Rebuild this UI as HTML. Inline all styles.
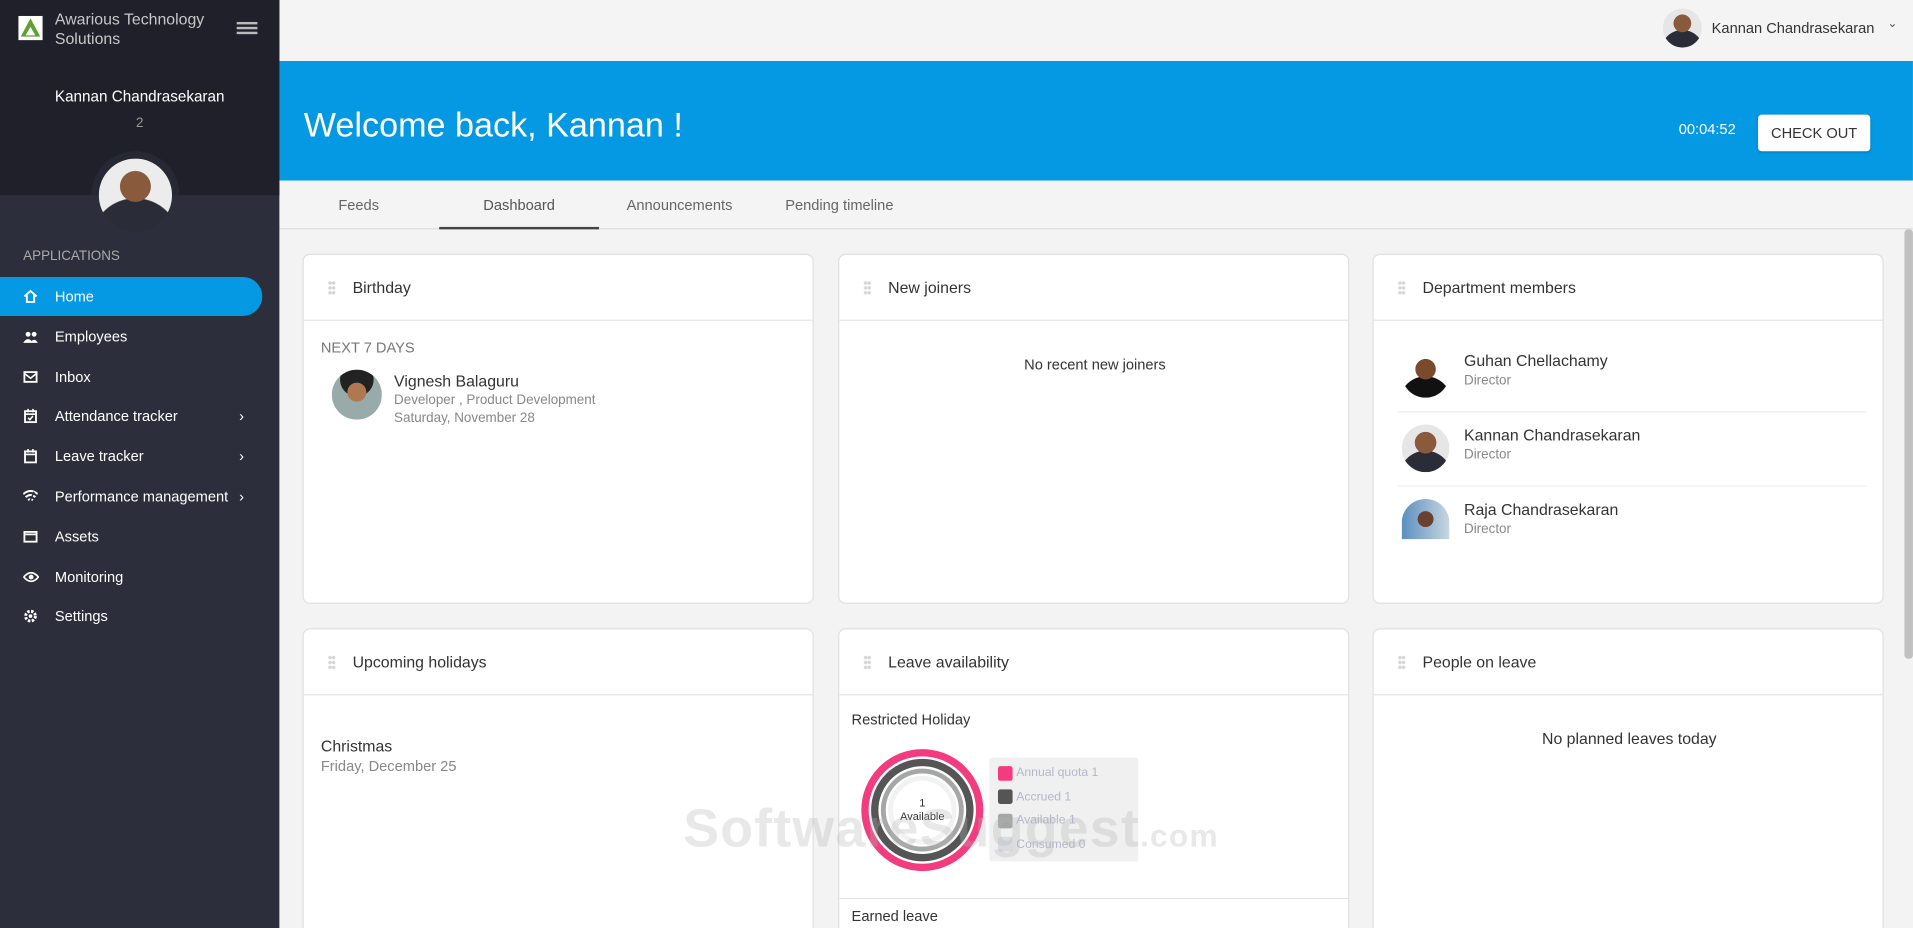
<!DOCTYPE html>
<html><head><meta charset="utf-8"><style>
*{box-sizing:border-box;margin:0;padding:0}
html,body{width:1913px;height:928px;overflow:hidden;background:#f3f3f3}
#o{position:relative;width:1913px;height:928px;overflow:hidden}
#w{position:absolute;left:0;top:0;width:1568px;height:761px;overflow:hidden;transform:scale(1.22);transform-origin:0 0;font-family:"Liberation Sans",sans-serif;color:#333}
.a{position:absolute}
.sb{left:0;top:0;width:229px;height:761px;background:#2c2f3b}
.sbt{left:0;top:0;width:229px;height:160px;background:#1f2029}
.mi{position:absolute;left:0;width:215px;height:32px;color:#fff;font-size:12px;line-height:32px;padding-left:45px}
.mi svg{position:absolute;left:19px;top:10px}
.mi .ch{position:absolute;left:196px;top:0;font-size:12px}
.card{position:absolute;background:#fff;border:1px solid #e0e0e0;border-radius:6px;overflow:hidden}
.ch2{height:54px;border-bottom:1px solid #e4e4e4;font-size:13px;line-height:54px;padding-left:40px;position:relative;color:#333}
.dots{position:absolute;left:20px;top:21px;width:6px;height:12px;background:radial-gradient(circle,#d6d6d6 1.3px,transparent 1.6px) 0 0/3px 4px}
.av{position:absolute;border-radius:50%;background:radial-gradient(circle at 50% 38%,#8a5a3c 0 28%,transparent 29%),radial-gradient(circle at 50% 110%,#2a2c38 0 45%,#e6e6e6 46%)}
.tab{position:absolute;top:148px;height:40px;line-height:40px;font-size:12px;color:#666;text-align:center}
</style></head><body><div id="o"><div id="w">
<div class="a" style="left:229px;top:0;width:1339px;height:50px;background:#f4f4f4"></div>
<div class="a" style="left:229px;top:50px;width:1339px;height:98px;background:#0499e2"></div>
<div class="a" style="left:249px;top:87px;font-size:28px;color:#fff">Welcome back, Kannan !</div>
<div class="a" style="left:1376px;top:99px;font-size:12px;color:#fff">00:04:52</div>
<div class="a" style="left:1441px;top:94px;width:92px;height:30px;background:#fff;border-radius:3px;font-size:12px;line-height:30px;text-align:center;color:#333;box-shadow:0 1px 2px rgba(0,0,0,.2)">CHECK OUT</div>
<div class="av" style="left:1363px;top:7px;width:32px;height:32px"></div>
<div class="a" style="left:1403px;top:16px;font-size:12px;color:#333">Kannan Chandrasekaran</div>
<div class="a" style="left:1547px;top:14px;font-size:10px;color:#555">&#8964;</div>
<div class="a" style="left:229px;top:148px;width:1339px;height:40px;background:#f4f4f4;border-bottom:1px solid #ddd"></div>
<div class="tab" style="left:264px;width:60px">Feeds</div>
<div class="tab" style="left:360px;width:131px;color:#555;border-bottom:2px solid #444">Dashboard</div>
<div class="tab" style="left:500px;width:114px">Announcements</div>
<div class="tab" style="left:630px;width:116px">Pending timeline</div>
<div class="a" style="left:1561px;top:188px;width:7px;height:352px;background:#c1c1c1;border-radius:3px"></div>

<div class="card" style="left:248px;top:208px;width:419px;height:287px"><div class="ch2"><div class="dots"></div>Birthday</div>
<div class="a" style="left:14px;top:69px;font-size:12px;color:#777">NEXT 7 DAYS</div>
<div class="av" style="left:23px;top:94px;width:41px;height:41px;background:radial-gradient(circle at 50% 45%,#b07850 0 25%,transparent 26%),radial-gradient(circle at 50% 20%,#222 0 35%,#9aa 36%)"></div>
<div class="a" style="left:74px;top:96px;font-size:13px;color:#333">Vignesh Balaguru</div>
<div class="a" style="left:74px;top:113px;font-size:11px;color:#888">Developer , Product Development</div>
<div class="a" style="left:74px;top:128px;font-size:11px;color:#888">Saturday, November 28</div></div>

<div class="card" style="left:687px;top:208px;width:419px;height:287px"><div class="ch2"><div class="dots"></div>New joiners</div>
<div class="a" style="left:0;width:419px;top:83px;text-align:center;font-size:12px;color:#333">No recent new joiners</div></div>

<div class="card" style="left:1125px;top:208px;width:419px;height:287px"><div class="ch2"><div class="dots"></div>Department members</div>
<div class="av" style="left:23px;top:78px;width:39px;height:39px;background:radial-gradient(circle at 50% 40%,#7a4a2c 0 27%,transparent 28%),radial-gradient(circle at 50% 110%,#111 0 45%,#fff 46%)"></div>
<div class="a" style="left:74px;top:79px;font-size:13px">Guhan Chellachamy</div><div class="a" style="left:74px;top:97px;font-size:11px;color:#888">Director</div>
<div class="a" style="left:20px;top:128px;width:384px;height:1px;background:#eee"></div>
<div class="av" style="left:23px;top:139px;width:39px;height:39px"></div>
<div class="a" style="left:74px;top:140px;font-size:13px">Kannan Chandrasekaran</div><div class="a" style="left:74px;top:158px;font-size:11px;color:#888">Director</div>
<div class="a" style="left:20px;top:189px;width:384px;height:1px;background:#eee"></div>
<div class="av" style="left:23px;top:200px;width:39px;height:33px;border-radius:20px 20px 0 0;background:radial-gradient(circle at 50% 50%,#6a4030 0 25%,transparent 26%),linear-gradient(90deg,#5a8fc0,#c9d6e0)"></div>
<div class="a" style="left:74px;top:201px;font-size:13px">Raja Chandrasekaran</div><div class="a" style="left:74px;top:219px;font-size:11px;color:#888">Director</div></div>

<div class="card" style="left:248px;top:515px;width:419px;height:260px"><div class="ch2"><div class="dots"></div>Upcoming holidays</div>
<div class="a" style="left:14px;top:88px;font-size:13px">Christmas</div>
<div class="a" style="left:14px;top:105px;font-size:12px;color:#888">Friday, December 25</div></div>

<div class="card" style="left:687px;top:515px;width:419px;height:260px"><div class="ch2"><div class="dots"></div>Leave availability</div>
<div class="a" style="left:10px;top:67px;font-size:12px;color:#333">Restricted Holiday</div>
<svg class="a" style="left:15px;top:95px" width="110" height="110"><circle cx="53" cy="53" r="47" fill="none" stroke="#f33b7f" stroke-width="6"/><circle cx="53" cy="53" r="39" fill="none" stroke="#555" stroke-width="6"/><circle cx="53" cy="53" r="32" fill="none" stroke="#a5a7a7" stroke-width="4"/><circle cx="53" cy="53" r="26" fill="none" stroke="#f2f2f2" stroke-width="4"/><text x="53" y="50" font-size="9" text-anchor="middle" font-family="Liberation Sans" fill="#333">1</text><text x="53" y="61" font-size="9" text-anchor="middle" font-family="Liberation Sans" fill="#333">Available</text></svg>
<div class="a" style="left:123px;top:105px;width:122px;height:85px;background:#f0f0f0;border-radius:2px;font-size:10px;color:#b0b8c8;line-height:19.5px;padding:3px 0 0 22px">
<div class="a" style="left:7px;top:7px;width:12px;height:12px;background:#f33b7f;border-radius:2px"></div>
<div class="a" style="left:7px;top:26px;width:12px;height:12px;background:#555;border-radius:2px"></div>
<div class="a" style="left:7px;top:46px;width:12px;height:12px;background:#a5a7a7;border-radius:2px"></div>
<div class="a" style="left:7px;top:65px;width:12px;height:12px;background:#d8dce0;border-radius:2px"></div>
Annual quota 1<br>Accrued 1<br>Available 1<br>Consumed 0</div>
<div class="a" style="left:0;top:220px;width:419px;height:1px;background:#e4e4e4"></div>
<div class="a" style="left:10px;top:228px;font-size:12px;color:#333">Earned leave</div></div>

<div class="card" style="left:1125px;top:515px;width:419px;height:260px"><div class="ch2"><div class="dots"></div>People on leave</div>
<div class="a" style="left:0;width:419px;top:82px;text-align:center;font-size:13px">No planned leaves today</div></div>

<div class="a" style="left:560px;top:655px;font-size:44px;font-weight:bold;color:rgba(180,180,180,.3);letter-spacing:1px">SoftwareSuggest<span style="font-size:26px">.com</span></div>

<div class="a sb"></div><div class="a sbt"></div>
<div class="a" style="left:75px;top:124px;width:72px;height:72px;border-radius:50%;background:#2c2f3b"></div>
<div class="a" style="left:75px;top:124px;width:72px;height:36px;border-radius:36px 36px 0 0;background:#262833"></div>
<div class="av" style="left:81px;top:130px;width:60px;height:60px;border:0;background:radial-gradient(circle at 50% 38%,#8a5a3c 0 26%,transparent 27%),radial-gradient(circle at 50% 115%,#2a2c38 0 48%,#ececec 49%)"></div>
<svg class="a" style="left:15px;top:13px" width="20" height="20"><rect width="20" height="20" fill="#fff"/><path d="M10 2 L18 17 L2 17Z" fill="#5aa332"/><path d="M10 9 L14 16 L6 16Z" fill="#fff"/></svg>
<div class="a" style="left:45px;top:8px;font-size:13px;color:#c8c8c8;line-height:16px">Awarious Technology<br>Solutions</div>
<div class="a" style="left:194px;top:18px;width:17px;height:2px;background:#bbb;box-shadow:0 4px 0 #bbb,0 8px 0 #bbb"></div>
<div class="a" style="left:0;width:229px;top:72px;text-align:center;font-size:12.5px;color:#fff">Kannan Chandrasekaran</div>
<div class="a" style="left:0;width:229px;top:95px;text-align:center;font-size:11px;color:#999">2</div>
<div class="a" style="left:19px;top:204px;font-size:11px;color:#aaa">APPLICATIONS</div>
<div class="mi" style="top:227px;background:#0499e2;border-radius:0 16px 16px 0"><svg width="12" height="12" viewBox="0 0 12 12"><path d="M1 6 L6 1.5 L11 6 M3 5 V10.5 H9 V5" stroke="#fff" stroke-width="1.6" fill="none"/></svg>Home</div>
<div class="mi" style="top:260px"><svg width="12" height="12"><circle cx="4" cy="4" r="2" fill="#fff"/><circle cx="9" cy="4" r="2" fill="#fff"/><path d="M0 11 Q4 5 8 11Z M6 11 Q9 6 12 11Z" fill="#fff"/></svg>Employees</div>
<div class="mi" style="top:293px"><svg width="12" height="12"><rect x="1" y="2" width="10" height="8" fill="none" stroke="#fff" stroke-width="1.5"/><path d="M1 3 L6 7 L11 3" stroke="#fff" stroke-width="1.3" fill="none"/></svg>Inbox</div>
<div class="mi" style="top:325px"><svg width="12" height="12"><rect x="1.5" y="2" width="9" height="9" fill="none" stroke="#fff" stroke-width="1.5"/><path d="M1 4.5H11M4 0V3M8 0V3M4 7.5 L5.5 9 L8 6" stroke="#fff" stroke-width="1.3" fill="none"/></svg>Attendance tracker<span class="ch">&#8250;</span></div>
<div class="mi" style="top:358px"><svg width="12" height="12"><rect x="1.5" y="2" width="9" height="9" fill="none" stroke="#fff" stroke-width="1.5"/><path d="M1 4.5H11M4 0V3M8 0V3" stroke="#fff" stroke-width="1.3"/></svg>Leave tracker<span class="ch">&#8250;</span></div>
<div class="mi" style="top:391px"><svg width="12" height="12"><path d="M0 4 Q6 -1 12 4 M2 6.5 Q6 3 10 6.5 M4 9 Q6 7.5 8 9" stroke="#fff" stroke-width="1.6" fill="none"/><path d="M9 2 L5 11" stroke="#2c2f3b" stroke-width="1.2"/></svg>Performance management<span class="ch">&#8250;</span></div>
<div class="mi" style="top:424px"><svg width="12" height="12"><rect x="1" y="2" width="10" height="8" fill="none" stroke="#fff" stroke-width="1.5"/><path d="M1 4H11" stroke="#fff" stroke-width="1.5"/></svg>Assets</div>
<div class="mi" style="top:457px"><svg width="13" height="12"><path d="M0.5 6 Q6.5 -1 12.5 6 Q6.5 13 0.5 6Z" fill="none" stroke="#fff" stroke-width="1.4"/><circle cx="6.5" cy="6" r="2" fill="#fff"/></svg>Monitoring</div>
<div class="mi" style="top:489px"><svg width="12" height="12"><circle cx="6" cy="6" r="4" fill="none" stroke="#fff" stroke-width="2.4" stroke-dasharray="2 1.2"/><circle cx="6" cy="6" r="1.5" fill="#fff"/></svg>Settings</div>
</div></div></body></html>
